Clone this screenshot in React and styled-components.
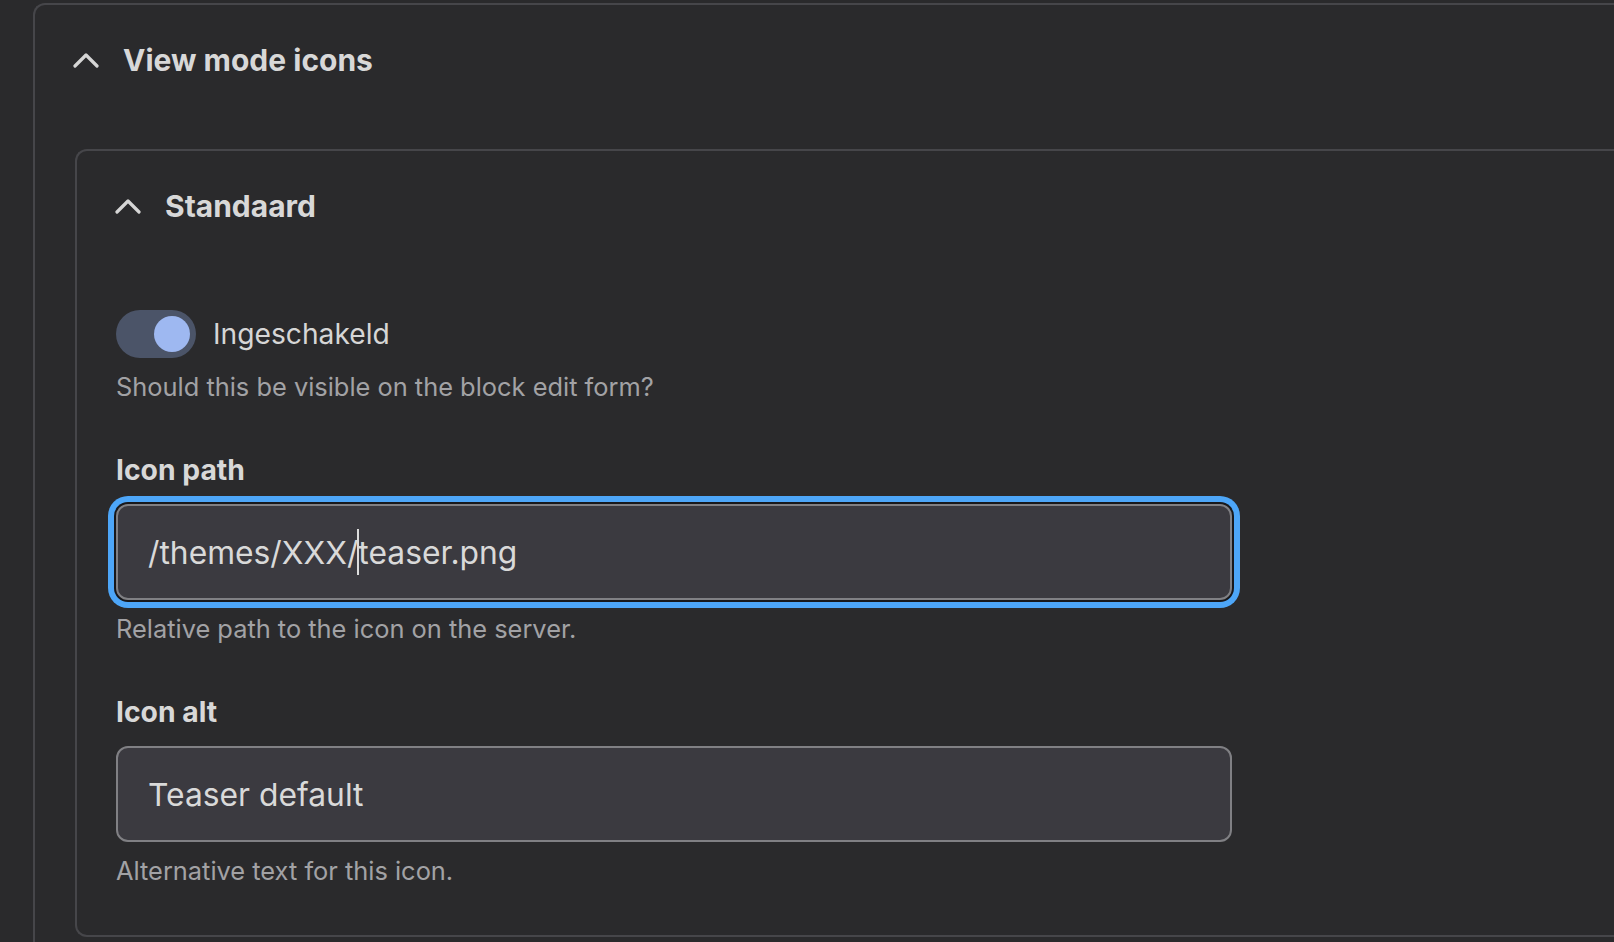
import React from "react";
import styled, { createGlobalStyle } from "styled-components";

const Global = createGlobalStyle`
  html, body {
    margin: 0;
    padding: 0;
    background: #2a2a2c;
    overflow: hidden;
  }
  body {
    font-family: Inter, "Noto Sans", "Liberation Sans", sans-serif;
    color: #d6d6d6;
  }
`;

const Page = styled.main`
  padding: 3px 0 0 33px;
`;

const Panel = styled.section`
  border: 2px solid #46464a;
  border-right: none;
  border-radius: 12px 0 0 12px;
  background: #2a2a2c;
`;

const PanelHeader = styled.div`
  display: flex;
  align-items: center;
  gap: 24px;
  height: 110px;
  padding-left: 38px;
  cursor: pointer;
`;

const PanelTitle = styled.h2`
  margin: 0;
  font-size: 30px;
  font-weight: 700;
  color: #d8d8d8;
`;

const PanelBody = styled.div`
  padding: ${(p) => p.$pad};
`;

const FieldList = styled.div`
  display: flex;
  flex-direction: column;
  gap: 43px;
`;

const Field = styled.div`
  display: flex;
  flex-direction: column;
`;

const Label = styled.label`
  font-size: 28.3px;
  line-height: 42px;
  font-weight: 700;
  color: #d8d8d8;
  margin-bottom: 13px;
`;

const Description = styled.div`
  margin-top: 9px;
  font-size: 25.4px;
  line-height: 39px;
  color: #a2a2a5;
`;

const ToggleRow = styled.div`
  display: flex;
  align-items: center;
  gap: 17px;
  height: 48px;
`;

const Track = styled.span`
  position: relative;
  display: inline-block;
  width: 80px;
  height: 48px;
  border-radius: 24px;
  background: ${(p) => (p.$on ? "#4b5468" : "#555559")};
  flex-shrink: 0;
`;

const Knob = styled.span`
  position: absolute;
  top: 6px;
  left: ${(p) => (p.$on ? "38px" : "6px")};
  width: 36px;
  height: 36px;
  border-radius: 50%;
  background: ${(p) => (p.$on ? "#9eb8f1" : "#bdbdbd")};
`;

const ToggleLabel = styled.span`
  font-size: 28.2px;
  line-height: 42px;
  color: #d6d6d6;
`;

const TextBox = styled.div`
  box-sizing: border-box;
  width: 1116px;
  height: 96px;
  display: flex;
  align-items: center;
  padding-left: 30px;
  border: 2px solid #808084;
  border-radius: 12px;
  background: #3b3a40;
  font-size: 31.8px;
  color: #d9d9d9;
  white-space: pre;
  box-shadow: ${(p) =>
    p.$focused ? "0 0 0 2px #18181b, 0 0 0 8px #4da6f8" : "none"};
`;

const Caret = styled.span`
  display: inline-block;
  width: 2px;
  height: 46px;
  margin: 0 -1px;
  background: #dcdcdc;
  vertical-align: middle;
`;

const Chevron = () => (
  <svg width="26" height="16" viewBox="0 0 26 16" fill="none">
    <path
      d="M2 14 L13 3 L24 14"
      stroke="#d6d6d6"
      strokeWidth="3.2"
      strokeLinecap="round"
      strokeLinejoin="round"
    />
  </svg>
);

const Toggle = ({ on, label }) => (
  <ToggleRow>
    <Track $on={on}>
      <Knob $on={on} />
    </Track>
    <ToggleLabel>{label}</ToggleLabel>
  </ToggleRow>
);

export default function App() {
  return (
    <>
      <Global />
      <Page>
        <Panel>
          <PanelHeader>
            <Chevron />
            <PanelTitle>View mode icons</PanelTitle>
          </PanelHeader>
          <PanelBody $pad="34px 0 45px 40px">
            <Panel>
              <PanelHeader>
                <Chevron />
                <PanelTitle>Standaard</PanelTitle>
              </PanelHeader>
              <PanelBody $pad="49px 0 45px 39px">
                <FieldList>
                  <Field>
                    <Toggle on label="Ingeschakeld" />
                    <Description>
                      Should this be visible on the block edit form?
                    </Description>
                  </Field>
                  <Field>
                    <Label>Icon path</Label>
                    <TextBox $focused>
                      {"/themes/XXX/"}
                      <Caret />
                      {"teaser.png"}
                    </TextBox>
                    <Description>Relative path to the icon on the server.</Description>
                  </Field>
                  <Field>
                    <Label>Icon alt</Label>
                    <TextBox>Teaser default</TextBox>
                    <Description>Alternative text for this icon.</Description>
                  </Field>
                </FieldList>
              </PanelBody>
            </Panel>
          </PanelBody>
        </Panel>
      </Page>
    </>
  );
}
